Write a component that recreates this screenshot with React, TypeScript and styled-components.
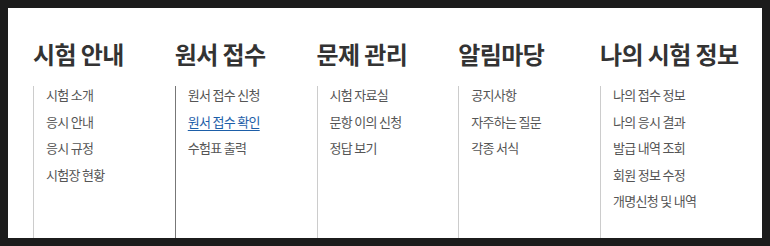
import React from "react";
import styled, { createGlobalStyle } from "styled-components";

const GlobalStyle = createGlobalStyle`
  html, body {
    margin: 0;
    padding: 0;
    background: #1c1c1c;
  }
  body {
    padding: 8px;
    font-family: "Noto Sans CJK KR", "Noto Sans", sans-serif;
  }
`;

type Menu = { title: string; items: string[]; active?: boolean; current?: number };

const MENUS: Menu[] = [
  { title: "시험 안내", items: ["시험 소개", "응시 안내", "응시 규정", "시험장 현황"] },
  {
    title: "원서 접수",
    items: ["원서 접수 신청", "원서 접수 확인", "수험표 출력"],
    active: true,
    current: 1,
  },
  { title: "문제 관리", items: ["시험 자료실", "문항 이의 신청", "정답 보기"] },
  { title: "알림마당", items: ["공지사항", "자주하는 질문", "각종 서식"] },
  {
    title: "나의 시험 정보",
    items: ["나의 접수 정보", "나의 응시 결과", "발급 내역 조회", "회원 정보 수정", "개명신청 및 내역"],
  },
];

const App: React.FC = () => {
  return (
    <>
      <GlobalStyle />
      <Panel>
        <Columns>
          {MENUS.map((menu) => (
            <Column key={menu.title}>
              <Heading>{menu.title}</Heading>
              <SubList $active={menu.active}>
                {menu.items.map((item, i) => (
                  <SubItem key={item}>
                    <SubLink href="#" $current={menu.current === i}>
                      {item}
                    </SubLink>
                  </SubItem>
                ))}
              </SubList>
            </Column>
          ))}
        </Columns>
      </Panel>
    </>
  );
};

const Panel = styled.div`
  background: #fff;
  height: 230px;
  overflow: hidden;
`;

const Columns = styled.div`
  display: grid;
  grid-template-columns: repeat(5, 141.75px);
  padding-left: 25px;
  height: 100%;
`;

const Column = styled.div`
  display: flex;
  flex-direction: column;
`;

const Heading = styled.h2`
  margin: 0;
  padding: 31px 0 0 0;
  height: 47px;
  font-size: 24px;
  font-weight: 700;
  line-height: 30px;
  letter-spacing: -0.6px;
  color: #333;
  white-space: nowrap;
`;

const SubList = styled.ul<{ $active?: boolean }>`
  flex: 1;
  margin: 0;
  padding: 0 0 0 12px;
  list-style: none;
  border-left: 1px solid ${(p) => (p.$active ? "#777" : "#ccc")};
`;

const SubItem = styled.li`
  font-size: 13px;
  line-height: 18px;
  margin-bottom: 8.5px;
`;

const SubLink = styled.a<{ $current?: boolean }>`
  letter-spacing: -0.7px;
  white-space: nowrap;
  color: ${(p) => (p.$current ? "#1d5ea8" : "#555")};
  text-decoration: ${(p) => (p.$current ? "underline" : "none")};
  text-underline-offset: 3px;
`;

export default App;
